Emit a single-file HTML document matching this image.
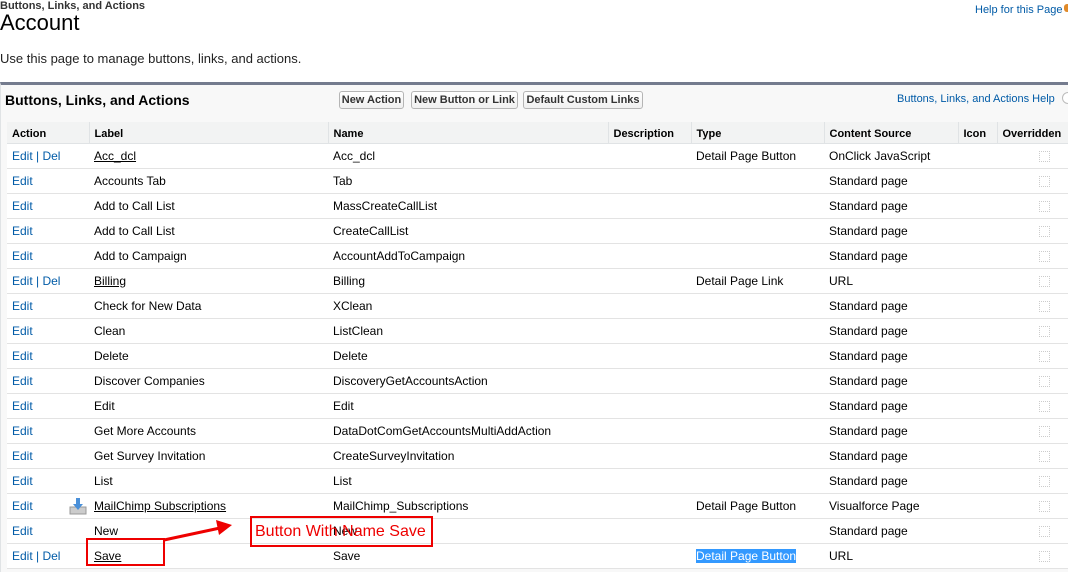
<!DOCTYPE html>
<html><head><meta charset="utf-8"><style>
*{margin:0;padding:0;box-sizing:border-box}
body{width:1068px;height:570px;overflow:hidden;background:#fff;font-family:"Liberation Sans",Arial,sans-serif;font-size:12px;color:#000;position:relative}
.a{position:absolute;white-space:nowrap}
.lnk{color:#015ba7}
.btn{position:absolute;top:91px;height:18px;border:1px solid #b5b5b5;border-radius:3px;background:linear-gradient(#fff,#f0f0f0);font-weight:bold;font-size:11px;color:#333;line-height:16px;text-align:center}
table{position:absolute;left:7px;top:122px;border-collapse:collapse;width:1080px;table-layout:fixed}
th{background:#f2f3f3;font-size:11px;font-weight:bold;text-align:left;height:21px;padding-left:5px;padding-top:3px;border-right:1px solid #e0e3e5;border-bottom:1px solid #e0e3e5}
td{height:25px;padding-left:5px;border-bottom:1px solid #e3e3e3;white-space:nowrap;background:#fff}
td.ed{color:#015ba7}
u{text-decoration:underline}
.cb{display:inline-block;width:11px;height:11px;border:1px dotted #ccc;margin-left:37px;vertical-align:middle}
</style></head><body>
<div class="a" style="left:0;top:0;font-size:11px;font-weight:bold;color:#333">Buttons, Links, and Actions</div>
<div class="a" style="left:0;top:10px;font-size:22px;color:#000">Account</div>
<div class="a lnk" style="left:975px;top:4px;font-size:11px">Help for this Page</div>
<div class="a" style="left:1064px;top:4px;width:4px;height:8px;background:#e08a2a;border-radius:3px 0 0 3px"></div>
<div class="a" style="left:0;top:51px;font-size:13px;color:#222">Use this page to manage buttons, links, and actions.</div>
<div class="a" style="left:0;top:82px;width:1068px;height:490px;background:#f8f8f8;border-top:3px solid #747b8e;border-left:1px solid #e0e3e5"></div>
<div class="a" style="left:5px;top:92px;font-size:14px;font-weight:bold">Buttons, Links, and Actions</div>
<div class="btn" style="left:339px;width:65px">New Action</div>
<div class="btn" style="left:411px;width:107px">New Button or Link</div>
<div class="btn" style="left:523px;width:120px">Default Custom Links</div>
<div class="a lnk" style="left:897px;top:93px;font-size:11px">Buttons, Links, and Actions Help</div>
<div class="a" style="left:1062px;top:92px;width:12px;height:12px;border:1px solid #bbb;border-radius:50%;background:#fff"></div>
<table>
<colgroup><col style="width:82px"><col style="width:239px"><col style="width:280px"><col style="width:83px"><col style="width:133px"><col style="width:134px"><col style="width:39px"><col style="width:90px"></colgroup>
<tr><th>Action</th><th>Label</th><th>Name</th><th>Description</th><th>Type</th><th>Content Source</th><th>Icon</th><th>Overridden</th></tr>
<tr><td class="ed">Edit | Del</td><td><u>Acc_dcl</u></td><td>Acc_dcl</td><td></td><td>Detail Page Button</td><td>OnClick JavaScript</td><td></td><td><span class="cb"></span></td></tr>
<tr><td class="ed">Edit</td><td>Accounts Tab</td><td>Tab</td><td></td><td></td><td>Standard page</td><td></td><td><span class="cb"></span></td></tr>
<tr><td class="ed">Edit</td><td>Add to Call List</td><td>MassCreateCallList</td><td></td><td></td><td>Standard page</td><td></td><td><span class="cb"></span></td></tr>
<tr><td class="ed">Edit</td><td>Add to Call List</td><td>CreateCallList</td><td></td><td></td><td>Standard page</td><td></td><td><span class="cb"></span></td></tr>
<tr><td class="ed">Edit</td><td>Add to Campaign</td><td>AccountAddToCampaign</td><td></td><td></td><td>Standard page</td><td></td><td><span class="cb"></span></td></tr>
<tr><td class="ed">Edit | Del</td><td><u>Billing</u></td><td>Billing</td><td></td><td>Detail Page Link</td><td>URL</td><td></td><td><span class="cb"></span></td></tr>
<tr><td class="ed">Edit</td><td>Check for New Data</td><td>XClean</td><td></td><td></td><td>Standard page</td><td></td><td><span class="cb"></span></td></tr>
<tr><td class="ed">Edit</td><td>Clean</td><td>ListClean</td><td></td><td></td><td>Standard page</td><td></td><td><span class="cb"></span></td></tr>
<tr><td class="ed">Edit</td><td>Delete</td><td>Delete</td><td></td><td></td><td>Standard page</td><td></td><td><span class="cb"></span></td></tr>
<tr><td class="ed">Edit</td><td>Discover Companies</td><td>DiscoveryGetAccountsAction</td><td></td><td></td><td>Standard page</td><td></td><td><span class="cb"></span></td></tr>
<tr><td class="ed">Edit</td><td>Edit</td><td>Edit</td><td></td><td></td><td>Standard page</td><td></td><td><span class="cb"></span></td></tr>
<tr><td class="ed">Edit</td><td>Get More Accounts</td><td>DataDotComGetAccountsMultiAddAction</td><td></td><td></td><td>Standard page</td><td></td><td><span class="cb"></span></td></tr>
<tr><td class="ed">Edit</td><td>Get Survey Invitation</td><td>CreateSurveyInvitation</td><td></td><td></td><td>Standard page</td><td></td><td><span class="cb"></span></td></tr>
<tr><td class="ed">Edit</td><td>List</td><td>List</td><td></td><td></td><td>Standard page</td><td></td><td><span class="cb"></span></td></tr>
<tr><td class="ed">Edit</td><td><u>MailChimp Subscriptions</u></td><td>MailChimp_Subscriptions</td><td></td><td>Detail Page Button</td><td>Visualforce Page</td><td></td><td><span class="cb"></span></td></tr>
<tr><td class="ed">Edit</td><td>New</td><td>New</td><td></td><td></td><td>Standard page</td><td></td><td><span class="cb"></span></td></tr>
<tr><td class="ed">Edit | Del</td><td><u>Save</u></td><td>Save</td><td></td><td><span style="background:#3399ff;color:#fff">Detail Page Button</span></td><td>URL</td><td></td><td><span class="cb"></span></td></tr>
</table>
<svg class="a" style="left:68px;top:496px" width="20" height="20" viewBox="0 0 20 20"><rect x="2" y="11" width="16" height="7" fill="#ccc" stroke="#999"/><path d="M8 2h4v6h3l-5 6-5-6h3z" fill="#4a90d9"/></svg>
<div class="a" style="left:86px;top:538px;width:79px;height:28px;border:2px solid #e00"></div>
<div class="a" style="left:250px;top:516px;width:183px;height:31px;border:2px solid #e00"></div>
<div class="a" style="left:255px;top:523px;font-size:16px;color:#e00">Button With Name Save</div>
<svg class="a" style="left:160px;top:515px" width="80" height="30"><line x1="4" y1="25" x2="60" y2="13" stroke="#e00" stroke-width="3"/><path d="M72 10L56 5L59 20Z" fill="#e00"/></svg>
</body></html>
